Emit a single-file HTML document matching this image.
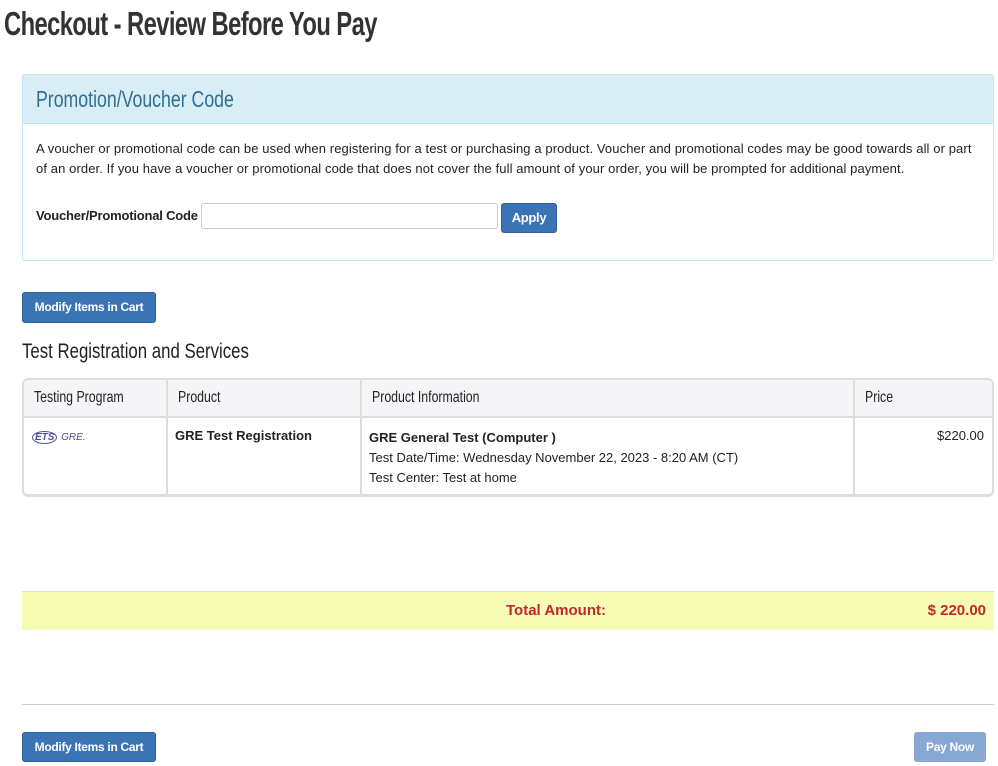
<!DOCTYPE html>
<html><head><meta charset="utf-8"><style>
*{box-sizing:border-box;margin:0;padding:0}
body{width:998px;height:766px;background:#fff;font-family:"Liberation Sans",sans-serif;color:#222;position:relative;overflow:hidden;font-size:13px}
.a{position:absolute}
.n{display:inline-block;transform-origin:0 50%;white-space:nowrap}
.btn{position:absolute;background:#3a74b5;color:#fff;border:1px solid #2e5f96;border-radius:3px;font-weight:bold;font-size:12px;text-align:center;letter-spacing:-0.3px}
td,th{border-right:2px solid #ddd;vertical-align:top;text-align:left}
th .n{transform:scaleX(0.77);font-weight:normal;font-size:16px}
</style></head><body>
<div class="a n" style="left:4px;top:5px;font-size:33px;font-weight:bold;color:#333;letter-spacing:-0.8px;transform:scaleX(0.72)">Checkout - Review Before You Pay</div>
<div class="a" style="left:22px;top:74px;width:972px;height:187px;border:1px solid #bce8f1;border-radius:3px">
 <div style="height:49px;background:#d9edf7;border-bottom:1px solid #bce8f1"></div>
</div>
<div class="a n" style="left:36px;top:86px;font-size:23px;color:#31708f;transform:scaleX(0.77)">Promotion/Voucher Code</div>
<div class="a" style="left:36px;top:139px;width:950px;line-height:20px;font-size:13px;letter-spacing:0.1px">A voucher or promotional code can be used when registering for a test or purchasing a product. Voucher and promotional codes may be good towards all or part of an order. If you have a voucher or promotional code that does not cover the full amount of your order, you will be prompted for additional payment.</div>
<div class="a" style="left:36px;top:208px;font-weight:bold;font-size:13px;letter-spacing:-0.2px">Voucher/Promotional Code</div>
<div class="a" style="left:201px;top:203px;width:297px;height:26px;border:1px solid #ccc;border-radius:3px"></div>
<div class="btn" style="left:501px;top:203px;width:56px;height:30px;line-height:28px;font-size:13px">Apply</div>
<div class="btn" style="left:22px;top:292px;width:134px;height:31px;line-height:29px">Modify Items in Cart</div>
<div class="a n" style="left:22px;top:340px;font-size:21px;color:#222;transform:scaleX(0.8)">Test Registration and Services</div>
<div class="a" style="left:22px;top:378px;width:972px;height:119px;border:2px solid #ddd;border-radius:6px;overflow:hidden;border-bottom-width:3px">
<table style="border-collapse:collapse;width:100%;height:100%">
<tr style="height:37px;background:#f5f5f7;border-bottom:2px solid #ddd">
<th style="width:143px;padding:9px 10px"><span class="n">Testing Program</span></th>
<th style="width:194px;padding:9px 10px"><span class="n">Product</span></th>
<th style="width:493px;padding:9px 10px"><span class="n">Product Information</span></th>
<th style="border-right:none;padding:9px 10px"><span class="n">Price</span></th></tr>
<tr><td style="padding:10px 8px"><span style="color:#4a4f9a;font-style:italic;font-size:10px;font-weight:bold;border:1px solid #4a4f9a;border-radius:50%;padding:0 2px">ETS</span> <span style="color:#4a4f9a;font-style:italic;font-size:10px">GRE.</span></td>
<td style="padding:10px 7px;font-weight:bold">GRE Test Registration</td>
<td style="padding:10px 7px;line-height:20px"><b>GRE General Test (Computer )</b><br>Test Date/Time: Wednesday November 22, 2023 - 8:20 AM (CT)<br>Test Center: Test at home</td>
<td style="border-right:none;padding:10px 8px;text-align:right">$220.00</td></tr>
</table></div>
<div class="a" style="left:22px;top:591px;width:972px;height:39px;background:#f6fcb3;border-top:1px solid #ddd"></div>
<div class="a" style="left:506px;top:602px;color:#c1272d;font-weight:bold;font-size:15px">Total Amount:</div>
<div class="a" style="right:12px;top:602px;color:#c1272d;font-weight:bold;font-size:15px">$ 220.00</div>
<div class="a" style="left:22px;top:704px;width:972px;height:1px;background:#ccc"></div>
<div class="btn" style="left:22px;top:732px;width:134px;height:30px;line-height:28px">Modify Items in Cart</div>
<div class="btn" style="left:914px;top:732px;width:72px;height:30px;line-height:28px;background:#86a8d3;border-color:#86a8d3">Pay Now</div>
</body></html>
